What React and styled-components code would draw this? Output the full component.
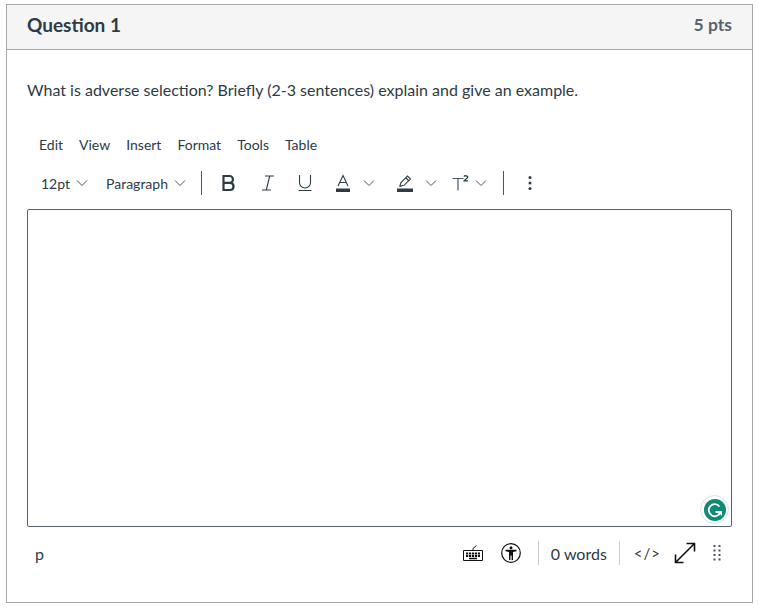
import styled, { createGlobalStyle } from 'styled-components'

const Global = createGlobalStyle`
  html, body { margin: 0; padding: 0; background: #fff; }
  body { font-family: Lato, "Open Sans", sans-serif; color: #2d3b45; }
  #root { padding: 4px 5px 0 6px; }
`

const Card = styled.div`
  width: 747px;
  height: 599px;
  box-sizing: border-box;
  border: 1px solid #a8a8a8;
  display: flex;
  flex-direction: column;
`
const Header = styled.div`
  height: 39px;
  flex: none;
  box-sizing: content-box;
  background: #f5f5f5;
  border-bottom: 1px solid #a8a8a8;
  display: flex;
  align-items: center;
  justify-content: space-between;
  padding: 0 20px 5px 20px;
`
const Title = styled.div`
  font-size: 19px;
  font-weight: 700;
  color: #2d3b45;
  font-variant-ligatures: common-ligatures;
`
const Points = styled.div`
  font-size: 17.5px;
  font-weight: 700;
  color: #57646d;
`
const Body = styled.div`
  flex: 1;
  display: flex;
  flex-direction: column;
  padding: 0 20px;
`
const Prompt = styled.div`
  font-size: 16px;
  line-height: 24px;
  margin-top: 28px;
  color: #2d3b45;
`
const Menubar = styled.div`
  display: flex;
  gap: 16px;
  margin: 33px 0 0 12px;
  height: 18px;
  align-items: center;
  font-size: 14px;
  color: #2d3b45;
`
const Toolbar = styled.div`
  display: flex;
  align-items: center;
  height: 28px;
  margin: 16px 0 0 14px;
  color: #2d3b45;
`
const Select = styled.div`
  display: flex;
  align-items: center;
  gap: 6px;
  font-size: 14px;
  margin-right: ${p => p.$mr || 0}px;
`
const Divider = styled.div`
  width: 1px;
  height: 24px;
  background: #4a5660;
  margin: ${p => p.$m};
`
const Tool = styled.div`
  display: flex;
  align-items: center;
  justify-content: center;
  margin-right: ${p => p.$mr || 0}px;
  line-height: 0;
`
const Editor = styled.div`
  position: relative;
  height: 318px;
  box-sizing: border-box;
  margin-top: 12px;
  border: 1px solid #56626c;
  border-radius: 2px;
`
const GrammarlyBadge = styled.div`
  position: absolute;
  right: 2px;
  bottom: 2px;
  width: 29px;
  height: 29px;
  border-radius: 50%;
  background: #fff;
  border: 1px solid #dde3e8;
  box-sizing: border-box;
  display: flex;
  align-items: center;
  justify-content: center;
`
const Status = styled.div`
  display: flex;
  align-items: center;
  height: 24px;
  margin-top: 14px;
`
const Path = styled.div`
  font-size: 16px;
  margin-left: 8px;
  color: #2d3b45;
`
const StatusRight = styled.div`
  margin-left: auto;
  display: flex;
  align-items: center;
  color: #2d3b45;
`
const StatusSep = styled.div`
  width: 1px;
  height: 24px;
  background: #c7cdd1;
  margin: ${p => p.$m};
`
const Words = styled.div`
  font-size: 16px;
`
const Code = styled.div`
  font-size: 15px;
  letter-spacing: 1px;
  margin-right: 13px;
`

const Chevron = () => (
  <svg width="12" height="12" viewBox="0 0 12 12" fill="none" stroke="#4a5660" strokeWidth="1">
    <path d="M1 3.500l5 5 5-5" />
  </svg>
)

const Bold = () => (
  <svg width="16" height="18" viewBox="0 0 16 18" fill="none" stroke="#2d3b45" strokeWidth="2.2">
    <path d="M2.500 2h6a3.400 3.400 0 010 6.900h-6zM2.500 8.900h7a3.600 3.600 0 010 7.100h-7z" />
  </svg>
)
const Italic = () => (
  <svg width="14" height="16" viewBox="0 0 14 16" fill="none" stroke="#2d3b45" strokeWidth="1.1">
    <path d="M4 1h9M1 15h9M8.700 1L5.300 15" />
  </svg>
)
const Underline = () => (
  <svg width="14" height="18" viewBox="0 0 14 18" fill="none" stroke="#2d3b45" strokeWidth="1.1">
    <path d="M1.500 1v7.500a5.500 5.500 0 0011 0V1M.5 16.500h13" />
  </svg>
)
const TextColor = () => (
  <svg width="14" height="18" viewBox="0 0 14 18" fill="none">
    <path d="M2 12L7 1.500 12 12M3.500 8.500h7" stroke="#2d3b45" strokeWidth="1.1" />
    <path d="M0 14.500h14V18H0z" fill="#2d3b45" />
  </svg>
)
const Highlight = () => (
  <svg width="16" height="18" viewBox="0 0 16 18" fill="none">
    <path d="M3 11.500l1-3L10.500 2l3 3L7 11.300l-3 .7zM9 4l3 3" stroke="#2d3b45" strokeWidth="1.1" />
    <path d="M3 11.800l-1.500 1h3.500" fill="#2d3b45" />
    <path d="M0 14.500h16V18H0z" fill="#2d3b45" />
  </svg>
)
const Superscript = () => (
  <svg width="17" height="16" viewBox="0 0 17 16" fill="none" stroke="#4a5660">
    <path d="M.5 3.500h11M6 3.500V15.500" strokeWidth="1.2" />
    <path d="M12 1.700c.3-1.300 3.800-1.300 3.800.4 0 1.300-3 2.200-3.700 3.700h4" stroke="#2d3b45" strokeWidth="1.3" />
  </svg>
)
const Dots = () => (
  <svg width="4" height="16" viewBox="0 0 4 16" fill="#2d3b45">
    <circle cx="2" cy="2.500" r="1.500" />
    <circle cx="2" cy="8" r="1.500" />
    <circle cx="2" cy="13.500" r="1.500" />
  </svg>
)
const Keyboard = () => (
  <svg width="20" height="18" viewBox="0 0 20 18" fill="none" stroke="#111">
    <path d="M.5 6.500h19v10H.5zM10 6.500V4.500L13.500 1.500" strokeWidth="1" />
    <path d="M3 9.500h14M3 12h14" strokeWidth="1.800" strokeDasharray="2.200 .8" />
    <path d="M6 14.500h8" strokeWidth="1.500" />
  </svg>
)
const Accessibility = () => (
  <svg width="20" height="20" viewBox="0 0 20 20" fill="#111">
    <circle cx="10" cy="10" r="9.300" fill="none" stroke="#111" strokeWidth="1.200" />
    <circle cx="10" cy="4.800" r="1.500" />
    <path d="M4.500 6.800h11v1.500l-3.500.7V17h-1.400v-4.500h-1.200V17H8V9L4.500 8.300z" />
  </svg>
)
const Expand = () => (
  <svg width="22" height="22" viewBox="0 0 22 22" fill="none" stroke="#111" strokeWidth="1.600">
    <path d="M1.500 20.500L20.500 1.500M12.500 1.500h8v8M1.500 12.500v8h8" />
  </svg>
)
const Grip = () => (
  <svg width="8" height="16" viewBox="0 0 8 16" fill="#4a5660">
    {[0, 4.500, 9, 13.500].map(y =>
      [0.5, 5.500].map(x => <rect key={`${x}-${y}`} x={x} y={y} width="2" height="2" />)
    )}
  </svg>
)
const GrammarlyMark = () => (
  <svg width="22" height="22" viewBox="0 0 22 22">
    <circle cx="11" cy="11" r="11" fill="#0f8a73" />
    <path d="M15.500 7.500A6 6 0 1016.500 13H11.500" fill="none" stroke="#fff" strokeWidth="1.800" />
    <path d="M14 14l3-1 .5 3.300" fill="none" stroke="#fff" strokeWidth="1.500" />
  </svg>
)

export default function App() {
  return (
    <>
      <Global />
      <Card>
        <Header>
          <Title>Question 1</Title>
          <Points>5 pts</Points>
        </Header>
        <Body>
          <Prompt>What is adverse selection? Briefly (2-3 sentences) explain and give an example.</Prompt>
          <Menubar>
            <span>Edit</span>
            <span>View</span>
            <span>Insert</span>
            <span>Format</span>
            <span>Tools</span>
            <span>Table</span>
          </Menubar>
          <Toolbar>
            <Select $mr={18}>12pt <Chevron /></Select>
            <Select>Paragraph <Chevron /></Select>
            <Divider $m="0 19px 0 15px" />
            <Tool $mr={24}><Bold /></Tool>
            <Tool $mr={23}><Italic /></Tool>
            <Tool $mr={24}><Underline /></Tool>
            <Tool $mr={13}><TextColor /></Tool>
            <Tool $mr={22}><Chevron /></Tool>
            <Tool $mr={12}><Highlight /></Tool>
            <Tool $mr={15}><Chevron /></Tool>
            <Tool $mr={6}><Superscript /></Tool>
            <Tool><Chevron /></Tool>
            <Divider $m="0 24px 0 16px" />
            <Tool><Dots /></Tool>
          </Toolbar>
          <Editor>
            <GrammarlyBadge><GrammarlyMark /></GrammarlyBadge>
          </Editor>
          <Status>
            <Path>p</Path>
            <StatusRight>
              <Tool $mr={18}><Keyboard /></Tool>
              <Tool><Accessibility /></Tool>
              <StatusSep $m="0 12px 0 17px" />
              <Words>0 words</Words>
              <StatusSep $m="0 14px 0 12px" />
              <Code>&lt;/&gt;</Code>
              <Tool $mr={17}><Expand /></Tool>
              <Tool $mr={11}><Grip /></Tool>
            </StatusRight>
          </Status>
        </Body>
      </Card>
    </>
  )
}
